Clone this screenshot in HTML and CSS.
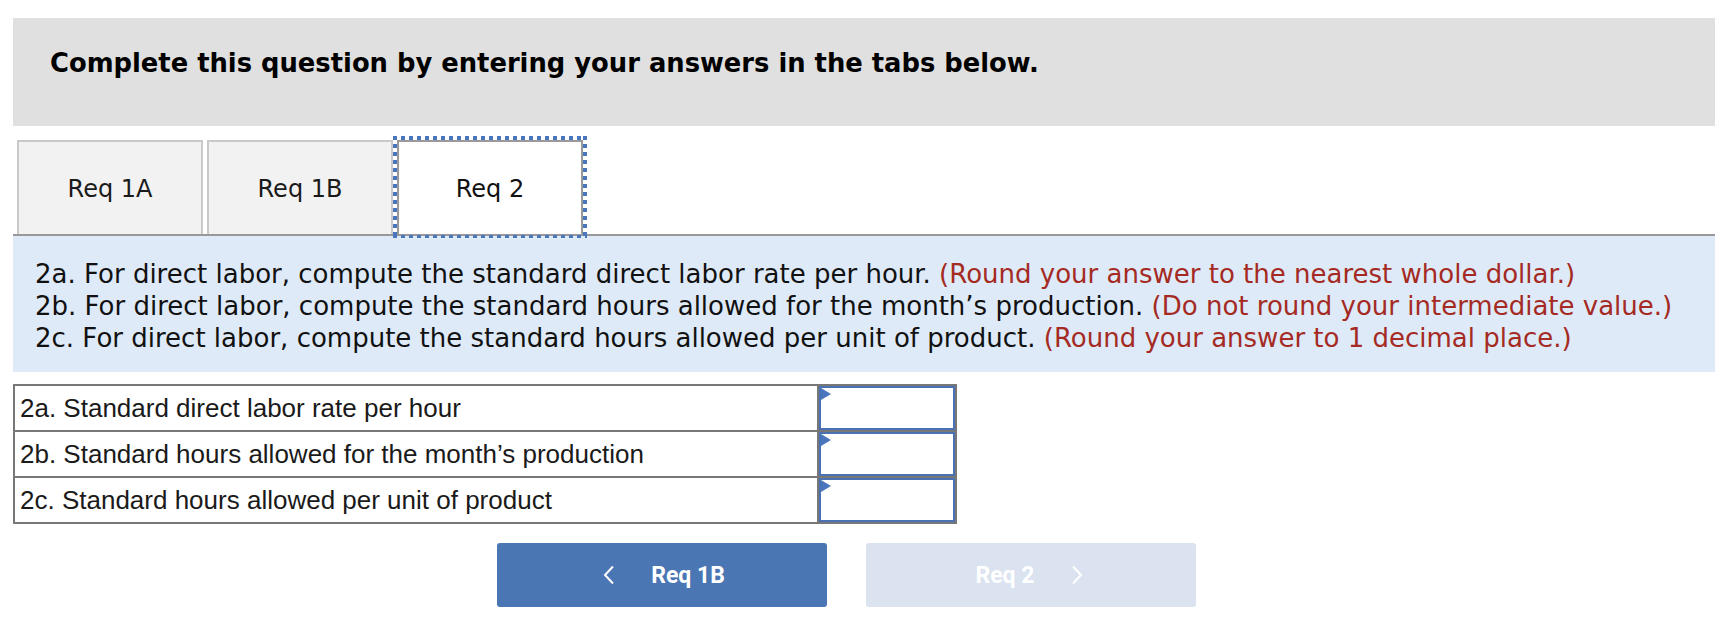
FILE: index.html
```html
<!DOCTYPE html>
<html lang="en">
<head>
<meta charset="utf-8">
<title>Req 2</title>
<link rel="stylesheet" href="styles.css">
</head>
<body>
<div class="page">
  <div class="header">
    <h2 class="title">Complete this question by entering your answers in the tabs below.</h2>
  </div>
  <div class="tabs">
    <div class="tab">Req 1A</div>
    <div class="tab">Req 1B</div>
    <div class="tab active">Req 2</div>
  </div>
  <div class="instructions">
    <p>2a. For direct labor, compute the standard direct labor rate per hour. <span class="hint">(Round your answer to the nearest whole dollar.)</span></p>
    <p>2b. For direct labor, compute the standard hours allowed for the month’s production. <span class="hint">(Do not round your intermediate value.)</span></p>
    <p>2c. For direct labor, compute the standard hours allowed per unit of product. <span class="hint">(Round your answer to 1 decimal place.)</span></p>
  </div>
  <table class="answers">
    <tr>
      <td class="label">2a. Standard direct labor rate per hour</td>
      <td class="value"><div class="input"></div></td>
    </tr>
    <tr>
      <td class="label">2b. Standard hours allowed for the month’s production</td>
      <td class="value"><div class="input"></div></td>
    </tr>
    <tr>
      <td class="label">2c. Standard hours allowed per unit of product</td>
      <td class="value"><div class="input"></div></td>
    </tr>
  </table>
  <div class="nav">
    <button class="nav-btn prev">
      <svg class="chev" width="12" height="20" viewBox="0 0 12 20"><polyline points="10,1.5 2,10 10,18.5" fill="none" stroke="#fff" stroke-width="2"/></svg>
      <span>Req 1B</span>
    </button>
    <button class="nav-btn next" disabled>
      <span>Req 2</span>
      <svg class="chev" width="12" height="20" viewBox="0 0 12 20"><polyline points="2,1.5 10,10 2,18.5" fill="none" stroke="#fff" stroke-width="2"/></svg>
    </button>
  </div>
</div>
</body>
</html>
```
FILE: styles.css
```css
body {
  margin: 0;
  background: #ffffff;
  font-family: "DejaVu Sans", Verdana, sans-serif;
  color: #111;
}

.page {
  margin: 18px 0 0 13px;
  width: 1702px;
}

.header {
  background: #e0e0e0;
  height: 108px;
  box-sizing: border-box;
  padding: 30px 0 0 37px;
}

.title {
  margin: 0;
  font-size: 25.8px;
  line-height: 30px;
  font-weight: bold;
  color: #000;
}

.tabs {
  display: flex;
  margin-top: 14px;
  height: 96px;
  box-sizing: border-box;
  border-bottom: 2px solid #999;
  padding-left: 4px;
}

.tab {
  width: 186px;
  box-sizing: border-box;
  border: 2px solid #c9c9c9;
  border-bottom: none;
  background: #f2f2f2;
  display: flex;
  align-items: center;
  justify-content: center;
  padding-top: 2px;
  font-size: 24px;
  color: #1a1a1a;
  margin-right: 4px;
  position: relative;
}

.tab.active {
  background: #fff;
  border-color: #999;
  color: #111;
}

.tab.active::after {
  content: "";
  position: absolute;
  top: -6px;
  left: -6px;
  right: -6px;
  bottom: -4px;
  background:
    repeating-linear-gradient(90deg, #4a76bd 0 4px, transparent 4px 8px) top left / 100% 4px no-repeat,
    repeating-linear-gradient(90deg, #4a76bd 0 4px, transparent 4px 8px) bottom left / 100% 3px no-repeat,
    repeating-linear-gradient(180deg, #4a76bd 0 4px, transparent 4px 8px) top left / 4px 100% no-repeat,
    repeating-linear-gradient(180deg, #4a76bd 0 4px, transparent 4px 8px) top right / 4px 100% no-repeat;
}

.instructions {
  background: #deeaf7;
  padding: 22px 22px 18px;
  font-size: 26px;
  line-height: 32px;
  color: #111;
}

.instructions p {
  margin: 0;
}

.hint {
  color: #a52a24;
}

.answers {
  margin-top: 12px;
  border-collapse: collapse;
  border: 2px solid #777;
  width: 944px;
  font-family: "Liberation Sans", Arial, sans-serif;
  font-size: 26px;
  color: #1a1a1a;
}

.answers td {
  border: 2px solid #777;
  height: 44px;
  padding: 0;
}

.answers .label {
  padding-left: 5px;
}

.answers .value {
  width: 136px;
}

.input {
  position: relative;
  height: 44px;
  box-sizing: border-box;
  border: 2px solid #4a72b2;
  background: #fff;
}

.input::before {
  content: "";
  position: absolute;
  top: 0;
  left: 0;
  border-left: 10px solid #4a76bd;
  border-top: 6px solid transparent;
  border-bottom: 6px solid transparent;
}

.nav {
  display: flex;
  gap: 39px;
  margin-top: 19px;
  padding-left: 484px;
}

.nav-btn {
  width: 330px;
  height: 64px;
  border: none;
  border-radius: 3px;
  display: flex;
  align-items: center;
  justify-content: center;
  gap: 36px;
  font-family: Roboto, "Liberation Sans", sans-serif;
  font-weight: bold;
  font-size: 23px;
  color: #fff;
  padding: 0 0 0 4px;
}

.nav-btn.next {
  padding: 0 4px 0 0;
  background: #dae3ef;
}

.nav-btn.prev {
  background: #4a76b4;
}
```
